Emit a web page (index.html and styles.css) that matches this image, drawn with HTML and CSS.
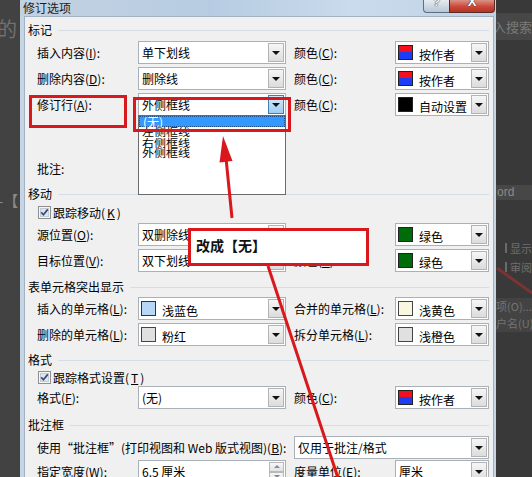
FILE: index.html
```html
<!DOCTYPE html>
<html lang="zh-CN">
<head>
    <meta charset="UTF-8">
    <title>修订选项</title>
    <link rel="stylesheet" href="styles.css">
</head>
<body>
    <div class="screen">
        <div class="desk desk-left">
            <span class="desk-char">的</span>
            <span class="desk-mark">-【</span>
        </div>

        <div class="dialog">
            <div class="titlebar">
                <span class="title">修订选项</span>
                <div class="caption-btns">
                    <span class="caption-btn help"><b>?</b></span>
                    <span class="caption-btn close"><b>X</b></span>
                </div>
            </div>

            <div class="frame">
                <div class="panel">
                    <section class="group group-mark">
                        <div class="heading">标记</div>
                        <div class="row">
                            <span class="label">插入内容(<u>I</u>):</span>
                            <div class="combo"><span class="combo-text">单下划线</span><span class="combo-btn"></span></div>
                            <span class="label label-r">颜色(<u>C</u>):</span>
                            <div class="combo"><span class="swatch sw-author"></span><span class="combo-text swatch-text">按作者</span><span class="combo-btn"></span></div>
                        </div>
                        <div class="row">
                            <span class="label">删除内容(<u>D</u>):</span>
                            <div class="combo"><span class="combo-text">删除线</span><span class="combo-btn"></span></div>
                            <span class="label label-r">颜色(<u>C</u>):</span>
                            <div class="combo"><span class="swatch sw-author"></span><span class="combo-text swatch-text">按作者</span><span class="combo-btn"></span></div>
                        </div>
                        <div class="row">
                            <span class="label">修订行(<u>A</u>):</span>
                            <div class="combo combo-open">
                                <span class="combo-text">外侧框线</span><span class="combo-btn"></span>
                                <ul class="droplist">
                                    <li class="drop-item selected">(无)</li>
                                    <li class="drop-item"><span>左侧框线</span></li>
                                    <li class="drop-item"><span>右侧框线</span></li>
                                    <li class="drop-item"><span>外侧框线</span></li>
                                </ul>
                            </div>
                            <span class="label label-r">颜色(<u>C</u>):</span>
                            <div class="combo"><span class="swatch sw-black"></span><span class="combo-text swatch-text">自动设置</span><span class="combo-btn"></span></div>
                        </div>
                        <div class="row row-note">
                            <span class="label">批注:</span>
                        </div>
                    </section>

                    <section class="group group-move">
                        <div class="heading">移动</div>
                        <label class="check-row">
                            <svg class="checkbox" width="13" height="13" viewBox="0 0 13 13"><rect x="0.5" y="0.5" width="12" height="12" fill="#f6f6f6" stroke="#8e8f8f"/><rect x="2.5" y="2.5" width="8" height="8" fill="#dde4ec" stroke="#c3cbd4"/><path d="M3.2 6.3 L5.4 8.8 L9.8 3.4" fill="none" stroke="#354a78" stroke-width="1.7"/></svg>
                            跟踪移动(<u>K</u>)
                        </label>
                        <div class="row">
                            <span class="label">源位置(<u>O</u>):</span>
                            <div class="combo"><span class="combo-text">双删除线</span><span class="combo-btn"></span></div>
                            <span class="label label-r">颜色(<u>C</u>):</span>
                            <div class="combo"><span class="swatch sw-green"></span><span class="combo-text swatch-text">绿色</span><span class="combo-btn"></span></div>
                        </div>
                        <div class="row">
                            <span class="label">目标位置(<u>V</u>):</span>
                            <div class="combo"><span class="combo-text">双下划线</span><span class="combo-btn"></span></div>
                            <span class="label label-r">颜色(<u>C</u>):</span>
                            <div class="combo"><span class="swatch sw-green"></span><span class="combo-text swatch-text">绿色</span><span class="combo-btn"></span></div>
                        </div>
                    </section>

                    <section class="group group-cells">
                        <div class="heading heading-tight">表单元格突出显示</div>
                        <div class="row">
                            <span class="label">插入的单元格(<u>L</u>):</span>
                            <div class="combo"><span class="swatch sw-blue"></span><span class="combo-text swatch-text">浅蓝色</span><span class="combo-btn"></span></div>
                            <span class="label label-r">合并的单元格(<u>L</u>):</span>
                            <div class="combo"><span class="swatch sw-yellow"></span><span class="combo-text swatch-text">浅黄色</span><span class="combo-btn"></span></div>
                        </div>
                        <div class="row">
                            <span class="label">删除的单元格(<u>L</u>):</span>
                            <div class="combo"><span class="swatch sw-gray"></span><span class="combo-text swatch-text">粉红</span><span class="combo-btn"></span></div>
                            <span class="label label-r">拆分单元格(<u>L</u>):</span>
                            <div class="combo"><span class="swatch sw-gray"></span><span class="combo-text swatch-text">浅橙色</span><span class="combo-btn"></span></div>
                        </div>
                    </section>

                    <section class="group group-format">
                        <div class="heading heading-tight">格式</div>
                        <label class="check-row check-row-tight">
                            <svg class="checkbox" width="13" height="13" viewBox="0 0 13 13"><rect x="0.5" y="0.5" width="12" height="12" fill="#f6f6f6" stroke="#8e8f8f"/><rect x="2.5" y="2.5" width="8" height="8" fill="#dde4ec" stroke="#c3cbd4"/><path d="M3.2 6.3 L5.4 8.8 L9.8 3.4" fill="none" stroke="#354a78" stroke-width="1.7"/></svg>
                            跟踪格式设置(<u>T</u>)
                        </label>
                        <div class="row">
                            <span class="label">格式(<u>F</u>):</span>
                            <div class="combo"><span class="combo-text">(无)</span><span class="combo-btn"></span></div>
                            <span class="label label-r">颜色(<u>C</u>):</span>
                            <div class="combo"><span class="swatch sw-author"></span><span class="combo-text swatch-text">按作者</span><span class="combo-btn"></span></div>
                        </div>
                    </section>

                    <section class="group group-balloon">
                        <div class="heading">批注框</div>
                        <div class="row row-wide">
                            <span class="label">使用“批注框”(打印视图和 Web 版式视图)(<u>B</u>):</span>
                            <div class="combo"><span class="combo-text">仅用于批注/格式</span><span class="combo-btn"></span></div>
                        </div>
                        <div class="row row-spin">
                            <span class="label">指定宽度(<u>W</u>):</span>
                            <div class="combo"><span class="combo-text">6.5 厘米</span><span class="spin"><i class="spin-up"></i><i class="spin-down"></i></span></div>
                            <span class="label label-r">度量单位(<u>E</u>):</span>
                            <div class="combo"><span class="combo-text">厘米</span><span class="combo-btn"></span></div>
                        </div>
                    </section>
                </div>
            </div>
        </div>

        <div class="desk desk-right">
            <div class="desk-band band-search">入搜索</div>
            <div class="desk-band band-word">ord</div>
            <div class="desk-item item-show"><i></i>显示</div>
            <div class="desk-item"><i></i>审阅</div>
            <div class="desk-menu menu-first">项(O)...</div>
            <div class="desk-menu">户名(U)...</div>
        </div>

        <svg class="marks" width="532" height="477" viewBox="0 0 532 477">
            <line x1="497" y1="268" x2="532" y2="293" stroke="#7a3434" stroke-width="3"/>
            <g fill="none" stroke="#d9181d" stroke-width="3">
                <rect x="30.5" y="96.5" width="95" height="30"/>
                <rect x="134.5" y="98.5" width="155" height="32"/>
                <line x1="226" y1="158" x2="232" y2="218"/>
                <line x1="268" y1="266" x2="342" y2="490"/>
            </g>
            <polygon points="223,136 232.5,161 219.5,162.5" fill="#d9181d"/>
        </svg>
        <div class="callout">改成【无】</div>
    </div>
</body>
</html>
```

FILE: styles.css
```css
body {
    margin: 0;
    font-family: "Noto Sans CJK SC", "Liberation Sans", sans-serif;
    font-size: 12px;
    color: #000;
    background-color: #3b3b3b;
}

.screen {
    position: relative;
    display: flex;
    width: 532px;
    height: 477px;
    overflow: hidden;
}

/* window behind the dialog */
.desk {
    flex-shrink: 0;
    display: flex;
    flex-direction: column;
    overflow: hidden;
    color: #6e6e6e;
    white-space: nowrap;
}

.desk-left {
    width: 20px;
    background-color: #424242;
}

.desk-char {
    margin: 17px 0 0 -3px;
    font-size: 20px;
    line-height: 24px;
    color: #707070;
}

.desk-mark {
    margin: 151px 0 0 -2px;
    font-size: 15px;
    line-height: 18px;
    color: #8a8a8a;
}

.desk-right {
    flex: 1;
    background-color: #393939;
}

.desk-band {
    background-color: #474747;
}

.band-search {
    margin-top: 13px;
    height: 27px;
    line-height: 27px;
    margin-left: -3px;
    font-size: 13px;
    color: #7a7a7a;
}

.band-word {
    margin-top: 145px;
    height: 15px;
    line-height: 15px;
    padding-left: 1px;
    font-family: "Liberation Sans", sans-serif;
    font-size: 12px;
    color: #8a8a8a;
}

.desk-item {
    display: flex;
    align-items: center;
    gap: 3px;
    height: 15px;
    padding-left: 9px;
    font-size: 11px;
}

.desk-item i {
    width: 7px;
    height: 8px;
    border: 1px solid #6a6a6a;
}

.item-show {
    margin-top: 40px;
    margin-bottom: 4px;
}

.desk-menu {
    height: 17px;
    line-height: 17px;
    font-size: 11px;
    background-color: #434343;
    color: #747474;
}

.menu-first {
    margin-top: 24px;
}

/* dialog frame */
.dialog {
    width: 476px;
    flex-shrink: 0;
    display: flex;
    flex-direction: column;
}

.titlebar {
    display: flex;
    height: 20px;
    background: linear-gradient(90deg, #c3d2e1, #b7cce2 40%, #c9dbec 70%, #bfd2e6);
}

.title {
    padding-left: 3px;
    line-height: 16px;
    color: #1b1b1b;
}

.caption-btns {
    display: flex;
    margin-left: auto;
    margin-right: 1px;
}

.caption-btn {
    display: flex;
    justify-content: center;
    align-items: flex-end;
    height: 13px;
    box-sizing: border-box;
    padding-bottom: 4px;
    overflow: hidden;
}

.caption-btn b {
    font-family: "Liberation Sans", sans-serif;
    font-size: 13px;
    line-height: 13px;
    color: #fff;
    text-shadow: 0 0 1px #222, 0 0 1px #222;
}

.help {
    width: 26px;
    border: 1px solid #5e6f82;
    border-top: none;
    border-right: none;
    border-radius: 0 0 0 4px;
    background: linear-gradient(#e6ecf2, #b8c6d5);
}

.close {
    width: 46px;
    border: 1px solid #5b2a24;
    border-top: none;
    border-radius: 0 0 4px 0;
    background: linear-gradient(#dc9284, #c9493b 55%, #b63222);
}

.frame {
    flex: 1;
    display: flex;
    padding: 0 2px 0 4px;
    background-color: #c6d5e4;
}

.panel {
    flex: 1;
    display: flex;
    flex-direction: column;
    padding: 0 4px 0 3px;
    border: 1px solid #a3b2c2;
    border-bottom: none;
    background-color: #f0f0f0;
}

/* groups */
.group {
    display: flex;
    flex-direction: column;
    gap: 3px;
}

.group-mark { margin-top: 6px; }
.group-move { margin-top: 7px; }
.group-cells { margin-top: 8px; }
.group-format { margin-top: 7px; }
.group-balloon { margin-top: 9px; }

.heading {
    display: flex;
    align-items: center;
    gap: 6px;
    height: 14px;
    line-height: 14px;
    margin-bottom: 1px;
    white-space: nowrap;
}

.heading::after {
    content: "";
    flex: 1;
    border-top: 1px solid #d5dde4;
}

.heading-tight {
    margin-bottom: 0;
}

.row {
    display: grid;
    grid-template-columns: 101px 148px 109px 94px;
    align-items: center;
    height: 23px;
    padding-left: 9px;
}

.row-note {
    margin-top: 38px;
}

.row-wide {
    grid-template-columns: 257px 195px;
}

.row-spin {
    margin-top: -2px;
}

.label {
    white-space: nowrap;
}

.label-r {
    padding-left: 8px;
}

.check-row {
    display: flex;
    align-items: center;
    gap: 2px;
    height: 14px;
    padding-left: 10px;
    margin-bottom: 1px;
    white-space: nowrap;
}

.check-row-tight {
    margin-bottom: -1px;
}

/* combo boxes */
.combo {
    position: relative;
    display: flex;
    height: 23px;
    box-sizing: border-box;
    border: 1px solid #a9b0b8;
    background-color: #fff;
}

.combo-text {
    flex: 1;
    padding-left: 3px;
    line-height: 21px;
    white-space: nowrap;
    overflow: hidden;
}

.combo-btn {
    display: flex;
    align-items: center;
    justify-content: center;
    width: 16px;
    margin: 1px;
    box-sizing: border-box;
    border: 1px solid #b3b3b3;
    background: linear-gradient(#f6f6f6, #dcdcdc);
}

.combo-btn::after {
    content: "";
    border-left: 4px solid transparent;
    border-right: 4px solid transparent;
    border-top: 4px solid #111;
}

.combo-open .combo-btn {
    border-color: #3c7fb1;
    background: linear-gradient(#d6ebfb, #9fcdf2);
}

.swatch {
    flex-shrink: 0;
    width: 15px;
    height: 15px;
    margin: 3px 0 0 2px;
    box-sizing: border-box;
    border: 1px solid #222;
}

.swatch-text {
    padding: 3px 0 0 6px;
    line-height: 20px;
}

.sw-author { background: linear-gradient(#f3101c 50%, #1c3cf5 50%); }
.sw-black { background-color: #000; }
.sw-green { background-color: #006b0a; }
.sw-blue { background-color: #b6d8f6; border-color: #333; }
.sw-yellow { background-color: #f8f8e0; border-color: #444; }
.sw-gray { background-color: #e0e0e0; border-color: #444; }

.spin {
    display: flex;
    flex-direction: column;
    width: 15px;
    margin: 1px;
}

.spin i {
    display: flex;
    align-items: center;
    justify-content: center;
    height: 10px;
    border: 1px solid #b8b8b8;
    background: linear-gradient(#f6f6f6, #e2e2e2);
}

.spin-up::after {
    content: "";
    border-left: 3px solid transparent;
    border-right: 3px solid transparent;
    border-bottom: 3px solid #7d8ba0;
}

.spin-down::after {
    content: "";
    border-left: 3px solid transparent;
    border-right: 3px solid transparent;
    border-top: 3px solid #7d8ba0;
}

/* opened list of the 修订行 combo */
.droplist {
    position: absolute;
    top: 21px;
    left: -1px;
    z-index: 5;
    width: 148px;
    height: 80px;
    margin: 0;
    padding: 0;
    list-style: none;
    box-sizing: border-box;
    border: 1px solid #6b6b6b;
    background-color: #fff;
}

.drop-item {
    height: 10.5px;
    line-height: 10.5px;
    padding-left: 3px;
    white-space: nowrap;
}

.drop-item span {
    display: inline-block;
    transform: scaleY(0.85);
    transform-origin: center;
}

.drop-item.selected {
    height: 11px;
    line-height: 9px;
    box-sizing: border-box;
    border: 1px dotted #1d4f8a;
    background-color: #3399ff;
    color: #fff;
}

/* annotations drawn over the screenshot */
.marks {
    position: absolute;
    top: 0;
    left: 0;
    z-index: 10;
    pointer-events: none;
}

.callout {
    position: absolute;
    top: 228px;
    left: 188px;
    z-index: 11;
    width: 181px;
    height: 38px;
    box-sizing: border-box;
    padding-left: 5px;
    border: 3px solid #d9181d;
    background-color: #fff;
    font-size: 14px;
    font-weight: bold;
    line-height: 28px;
    color: #111;
}
```
